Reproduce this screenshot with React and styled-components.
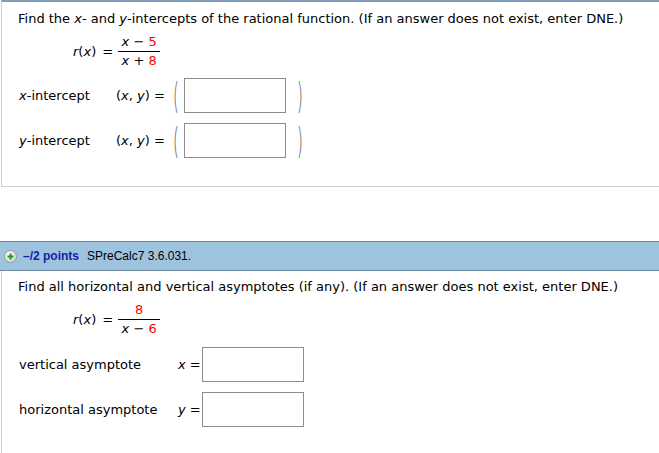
import React from 'react';
import styled, { createGlobalStyle } from 'styled-components';

const questions = {
  intercepts: [
    { label: <><i>x</i>-intercept</> },
    { label: <><i>y</i>-intercept</> },
  ],
  asymptotes: [
    { label: 'vertical asymptote', variable: 'x' },
    { label: 'horizontal asymptote', variable: 'y' },
  ],
};

function Fraction({ num, den }) {
  return (
    <Frac>
      <Num>{num}</Num>
      <Den>{den}</Den>
    </Frac>
  );
}

export default function App() {
  return (
    <Page>
      <GlobalStyle />
      <Panel $first>
        <Prompt>
          Find the <i>x</i>- and <i>y</i>-intercepts of the rational function. (If an answer does not exist, enter DNE.)
        </Prompt>
        <Formula>
          <Fn><i>r</i>(<i>x</i>)</Fn>
          <Eq>=</Eq>
          <Fraction
            num={<><i>x</i> − <Red>5</Red></>}
            den={<><i>x</i> + <Red>8</Red></>}
          />
        </Formula>
        <Rows>
          {questions.intercepts.map((q, i) => (
            <AnswerRow key={i}>
              <Label $w={97}>{q.label}</Label>
              <Pair>(<i>x</i>, <i>y</i>) =</Pair>
              <Paren>(</Paren>
              <AnswerBox />
              <Paren $right>)</Paren>
            </AnswerRow>
          ))}
        </Rows>
      </Panel>

      <Header>
        <PlusIcon>
          <svg width="13" height="13" viewBox="0 0 13 13">
            <defs>
              <radialGradient id="g" cx="40%" cy="35%" r="70%">
                <stop offset="0%" stopColor="#ffffff" />
                <stop offset="100%" stopColor="#c9cdd0" />
              </radialGradient>
            </defs>
            <circle cx="6.5" cy="6.5" r="6" fill="url(#g)" stroke="#8a9298" strokeWidth="0.8" />
            <path d="M6.5 3.5v6M3.5 6.5h6" stroke="#1f9a1f" strokeWidth="2" />
          </svg>
        </PlusIcon>
        <Points>–/2 points</Points>
        <Code>SPreCalc7 3.6.031.</Code>
      </Header>

      <Panel>
        <Prompt>
          Find all horizontal and vertical asymptotes (if any). (If an answer does not exist, enter DNE.)
        </Prompt>
        <Formula>
          <Fn><i>r</i>(<i>x</i>)</Fn>
          <Eq>=</Eq>
          <Fraction
            num={<Red>8</Red>}
            den={<><i>x</i> − <Red>6</Red></>}
          />
        </Formula>
        <Rows $asym>
          {questions.asymptotes.map((q) => (
            <AnswerRow key={q.variable}>
              <Label $w={159}>{q.label}</Label>
              <VarEq><i>{q.variable}</i> =</VarEq>
              <AnswerBox />
            </AnswerRow>
          ))}
        </Rows>
      </Panel>
    </Page>
  );
}

const GlobalStyle = createGlobalStyle`
  body {
    margin: 0;
    background: #ffffff;
    font-family: "DejaVu Sans", Verdana, sans-serif;
    color: #000;
  }
`;

const Page = styled.div`
  width: 659px;
  height: 453px;
  overflow: hidden;
`;

const Panel = styled.div`
  border-left: 1px solid #cfcfcf;
  border-top: ${(p) => (p.$first ? '2px solid #7f9cb8' : 'none')};
  border-bottom: ${(p) => (p.$first ? '1px solid #cccccc' : 'none')};
  margin-left: 1px;
  padding: ${(p) => (p.$first ? '9px 0 28px 17px' : '8px 0 40px 17px')};
  margin-bottom: ${(p) => (p.$first ? '54px' : '0')};
`;

const Prompt = styled.div`
  font-size: 13px;
  line-height: 16px;
  margin-left: -1px;
`;

const Formula = styled.div`
  display: flex;
  align-items: center;
  margin: 7px 0 0 54px;
  font-size: 13px;
`;

const Fn = styled.span`
  margin-right: 6px;
`;

const Eq = styled.span`
  margin-right: 5px;
`;

const Frac = styled.span`
  display: inline-flex;
  flex-direction: column;
  align-items: center;
  line-height: 16px;
`;

const Num = styled.span`
  padding: 0 2px 1px;
  border-bottom: 1px solid #000;
  min-width: 38px;
  text-align: center;
`;

const Den = styled.span`
  padding-top: 1px;
`;

const Red = styled.span`
  color: #ff0000;
`;

const Rows = styled.div`
  display: flex;
  flex-direction: column;
  gap: 10px;
  margin-top: ${(p) => (p.$asym ? '10px' : '9px')};
`;

const AnswerRow = styled.div`
  display: flex;
  align-items: center;
  font-size: 13px;
`;

const Label = styled.span`
  width: ${(p) => p.$w}px;
`;

const Pair = styled.span`
  width: 55px;
`;

const VarEq = styled.span`
  width: 24px;
  text-align: left;
`;

const Paren = styled.span`
  display: inline-block;
  font-family: "DejaVu Sans", sans-serif;
  font-weight: 200;
  font-size: 15px;
  line-height: 16px;
  color: #555;
  transform: scaleY(2.4);
  margin: ${(p) => (p.$right ? '0 0 0 9px' : '0 3px 0 0')};
  width: 10px;
  text-align: center;
`;

const AnswerBox = styled.div`
  width: 100px;
  height: 33px;
  border: 1px solid #8c8c8c;
  background: #fff;
`;

const Header = styled.div`
  display: flex;
  align-items: center;
  height: 28px;
  background: #9dc3df;
  border-top: 1px solid #6c8396;
  border-bottom: 1px solid #6f8a9f;
  padding-left: 4px;
  font-family: "Liberation Sans", Arial, sans-serif;
  font-size: 12px;
`;

const PlusIcon = styled.span`
  display: inline-flex;
  margin-right: 6px;
`;

const Points = styled.span`
  color: #1a1aaa;
  font-weight: bold;
  margin-right: 8px;
`;

const Code = styled.span`
  color: #000;
`;
